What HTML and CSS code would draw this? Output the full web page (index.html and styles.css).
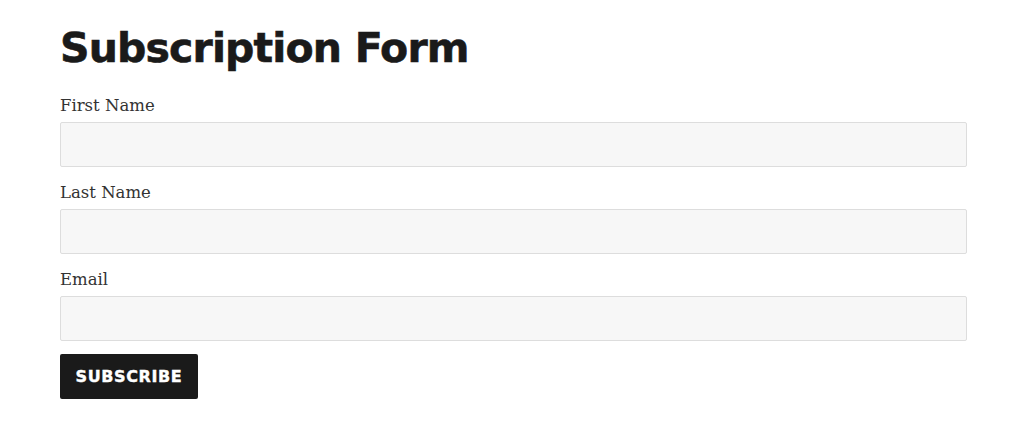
FILE: index.html
```html
<!DOCTYPE html>
<html>
	<head>
		<meta charset="UTF-8">
		<title>Subscription Form</title>
		<link rel="stylesheet" href="styles.css">
	</head>
	<body>
		<div class="wrap">
			<h1 class="title">Subscription Form</h1>
			<form class="subForm">
				<label class="field">
					<span class="lbl">First Name</span>
					<input type="text" class="inp">
				</label>
				<label class="field">
					<span class="lbl">Last Name</span>
					<input type="text" class="inp">
				</label>
				<label class="field">
					<span class="lbl">Email</span>
					<input type="email" class="inp">
				</label>
				<button type="button" class="btn">Subscribe</button>
			</form>
		</div>
	</body>
</html>
```

FILE: styles.css
```css
*{
	margin: 0;
	padding: 0;
	box-sizing: border-box;
}
body{
	background-color: #fff;
	color: #1a1a1a;
}
.wrap{
	width: 907px;
	margin-left: 60px;
	padding-top: 21px;
}
.title{
	font-family: "DejaVu Sans", sans-serif;
	font-weight: bold;
	font-size: 41px;
	line-height: 54px;
	letter-spacing: -0.85px;
	color: #1a1a1a;
	-webkit-text-stroke: 0.6px #1a1a1a;
}
.subForm{
	margin-top: 18px;
}
.field{
	display: block;
	margin-bottom: 13px;
}
.lbl{
	display: block;
	font-family: "DejaVu Serif", serif;
	font-size: 16.5px;
	line-height: 26px;
	color: #333;
	margin-bottom: 3px;
}
.inp{
	display: block;
	width: 100%;
	height: 45px;
	border: 1px solid #ddd;
	border-radius: 2px;
	background-color: #f7f7f7;
	outline: none;
}
.btn{
	display: block;
	height: 45px;
	width: 138px;
	border: none;
	border-radius: 2px;
	background-color: #1a1a1a;
	color: #fff;
	font-family: "DejaVu Sans", sans-serif;
	font-weight: bold;
	font-size: 16px;
	text-transform: uppercase;
	letter-spacing: 0.6px;
	-webkit-text-stroke: 0.4px #fff;
}
```
